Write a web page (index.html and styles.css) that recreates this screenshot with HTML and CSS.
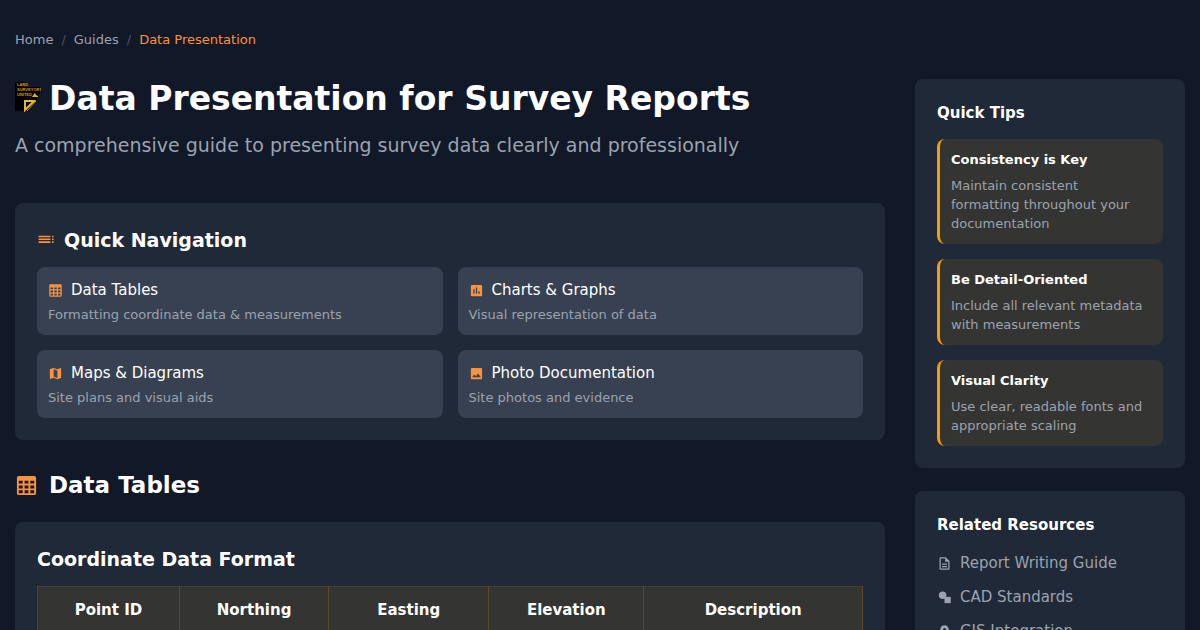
FILE: index.html
```html
<!doctype html>
<html lang="en">
  <head>
    <meta charset="UTF-8" />
    <meta name="viewport" content="width=device-width, initial-scale=1.0" />
    <title>Data Presentation for Survey Reports</title>
    <link rel="stylesheet" href="styles.css">
  </head>
  <body>
    <div class="container">
      <nav class="breadcrumb" aria-label="Breadcrumb">
        <a href="#">Home</a>
        <span class="separator">/</span>
        <a href="#">Guides</a>
        <span class="separator">/</span>
        <a href="#" class="current">Data Presentation</a>
      </nav>

      <div class="layout">
        <main>
          <header class="page-header">
            <h1>
              <svg class="logo" viewBox="0 0 26 30" aria-hidden="true">
                <path fill="#000" d="M0 0h8v5h17v6l-3 5v3l-9 10H0z" />
                <g class="logo-text">
                  <text x="2" y="4">LAND</text>
                  <text x="2" y="9">SURVEYORS</text>
                  <text x="2" y="14">UNITED</text>
                </g>
                <path fill="#e5ad16" d="M17 15l2-3 1-1 1 2 2 1v1z" />
                <path fill="none" stroke="#e5b83d" stroke-width="2" d="M10 19h9l-9 9z" />
                <path fill="none" stroke="#d99a0c" stroke-width="1" d="M21 19l-9 10" />
              </svg>
              Data Presentation for Survey Reports
            </h1>
            <p>A comprehensive guide to presenting survey data clearly and professionally</p>
          </header>

          <section class="panel quick-nav">
            <h2>
              <svg class="icon icon-md" viewBox="0 0 24 24" aria-hidden="true">
                <path d="M2 8h15V6H2v2zm0 3.500h15v-2H2v2zM2 15h15v-2H2v2zm17 0h2v-2h-2v2zm0-9v2h2V6h-2zm0 5.500h2v-2h-2v2z" />
              </svg>
              Quick Navigation
            </h2>
            <div class="nav-grid">
              <a href="#tables" class="nav-card">
                <span class="nav-title">
                  <svg class="icon" viewBox="0 0 24 24" aria-hidden="true">
                    <path fill-rule="evenodd" d="M4 2h16a2 2 0 0 1 2 2v16a2 2 0 0 1-2 2H4a2 2 0 0 1-2-2V4c0-1.100.9-2 2-2zm0 5v3h4V7zm6 0v3h4V7zm6 0v3h4V7zM4 12v3h4v-3zm6 0v3h4v-3zm6 0v3h4v-3zM4 17v3h4v-3zm6 0v3h4v-3zm6 0v3h4v-3z" />
                  </svg>
                  Data Tables
                </span>
                <span class="nav-text">Formatting coordinate data &amp; measurements</span>
              </a>
              <a href="#charts" class="nav-card">
                <span class="nav-title">
                  <svg class="icon" viewBox="0 0 24 24" aria-hidden="true">
                    <path d="M19 3H5c-1.100 0-2 .9-2 2v14c0 1.100.9 2 2 2h14c1.100 0 2-.9 2-2V5c0-1.100-.9-2-2-2zM9 17H7v-7h2v7zm4 0h-2V7h2v10zm4 0h-2v-4h2v4z" />
                  </svg>
                  Charts &amp; Graphs
                </span>
                <span class="nav-text">Visual representation of data</span>
              </a>
              <a href="#maps" class="nav-card">
                <span class="nav-title">
                  <svg class="icon" viewBox="0 0 24 24" aria-hidden="true">
                    <path d="M20.500 3l-.16.03L15 5.100 9 3 3.360 4.900c-.21.07-.36.25-.36.48V20.500c0 .28.22.5.5.5l.16-.03L9 18.900l6 2.100 5.640-1.900c.21-.07.36-.25.36-.48V3.500c0-.28-.22-.5-.5-.5zM15 19l-6-2.110V5l6 2.110V19z" />
                  </svg>
                  Maps &amp; Diagrams
                </span>
                <span class="nav-text">Site plans and visual aids</span>
              </a>
              <a href="#photos" class="nav-card">
                <span class="nav-title">
                  <svg class="icon" viewBox="0 0 24 24" aria-hidden="true">
                    <path d="M21 19V5c0-1.100-.9-2-2-2H5c-1.100 0-2 .9-2 2v14c0 1.100.9 2 2 2h14c1.100 0 2-.9 2-2zM8.500 13.500l2.500 3.010L14.500 12l4.500 6H5l3.500-4.500z" />
                  </svg>
                  Photo Documentation
                </span>
                <span class="nav-text">Site photos and evidence</span>
              </a>
            </div>
          </section>

          <section id="tables">
            <h2 class="section-title">
              <svg class="icon icon-lg" viewBox="0 0 24 24" aria-hidden="true">
                <path fill-rule="evenodd" d="M4 2h16a2 2 0 0 1 2 2v16a2 2 0 0 1-2 2H4a2 2 0 0 1-2-2V4c0-1.100.9-2 2-2zm0 5v3h4V7zm6 0v3h4V7zm6 0v3h4V7zM4 12v3h4v-3zm6 0v3h4v-3zm6 0v3h4v-3zM4 17v3h4v-3zm6 0v3h4v-3zm6 0v3h4v-3z" />
              </svg>
              Data Tables
            </h2>
            <div class="panel">
              <h3>Coordinate Data Format</h3>
              <table class="data-table">
                <thead>
                  <tr>
                    <th class="col-id" scope="col">Point ID</th>
                    <th class="col-northing" scope="col">Northing</th>
                    <th class="col-easting" scope="col">Easting</th>
                    <th class="col-elevation" scope="col">Elevation</th>
                    <th scope="col">Description</th>
                  </tr>
                </thead>
              </table>
            </div>
          </section>
        </main>

        <aside>
          <section class="panel">
            <h3 class="side-title">Quick Tips</h3>
            <div class="tips">
              <div class="tip">
                <h4>Consistency is Key</h4>
                <p>Maintain consistent formatting throughout your documentation</p>
              </div>
              <div class="tip">
                <h4>Be Detail-Oriented</h4>
                <p>Include all relevant metadata with measurements</p>
              </div>
              <div class="tip">
                <h4>Visual Clarity</h4>
                <p>Use clear, readable fonts and appropriate scaling</p>
              </div>
            </div>
          </section>

          <section class="panel">
            <h3 class="side-title">Related Resources</h3>
            <ul class="resources">
              <li>
                <a href="#">
                  <svg class="icon" viewBox="0 0 24 24" aria-hidden="true">
                    <path d="M8 16h8v2H8zm0-4h8v2H8zm6-10H6c-1.100 0-2 .9-2 2v16c0 1.100.89 2 1.990 2H18c1.100 0 2-.9 2-2V8l-6-6zm4 18H6V4h7v5h5v11z" />
                  </svg>
                  Report Writing Guide
                </a>
              </li>
              <li>
                <a href="#">
                  <svg class="icon" viewBox="0 0 24 24" aria-hidden="true">
                    <circle cx="9" cy="8.500" r="6" />
                    <path d="M12 11h10v10H12z" />
                  </svg>
                  CAD Standards
                </a>
              </li>
              <li>
                <a href="#">
                  <svg class="icon" viewBox="0 0 24 24" aria-hidden="true">
                    <path d="M12 2C8.130 2 5 5.130 5 9c0 5.250 7 13 7 13s7-7.750 7-13c0-3.870-3.130-7-7-7zm0 9.500a2.500 2.500 0 0 1 0-5 2.500 2.500 0 0 1 0 5z" />
                  </svg>
                  GIS Integration
                </a>
              </li>
            </ul>
          </section>
        </aside>
      </div>
    </div>
  </body>
</html>
```
FILE: styles.css
```css
:root {
  --bg: #111827;
  --panel: #1f2937;
  --card: #374151;
  --muted: #9ca3af;
  --orange: #fb923c;
  --amber: #f59e0b;
}

* {
  box-sizing: border-box;
  margin: 0;
  padding: 0;
}

body {
  background: var(--bg);
  color: #fff;
  font-family: 'DejaVu Sans', Verdana, sans-serif;
  font-size: 15px;
  line-height: 23px;
}

a {
  color: inherit;
  text-decoration: none;
}

.container {
  padding: 30px 15px;
}

.breadcrumb {
  display: flex;
  gap: 8px;
  margin-bottom: 30px;
  color: var(--muted);
  font-size: 13px;
  line-height: 19px;
}

.separator {
  color: #4b5563;
}

.breadcrumb .current {
  color: var(--orange);
}

.layout {
  display: grid;
  grid-template-columns: 1fr 270px;
  gap: 30px;
}

.page-header {
  margin-bottom: 44px;
}

h1 {
  display: flex;
  align-items: center;
  gap: 8px;
  margin-bottom: 13px;
  font-size: 33px;
  line-height: 40px;
}

.logo {
  width: 26px;
  height: 30px;
  margin-bottom: 4px;
}

.logo-text {
  fill: #d9950a;
  font-family: 'Liberation Sans Narrow', 'Liberation Sans', sans-serif;
  font-size: 4px;
  font-weight: bold;
}

.page-header p {
  color: var(--muted);
  font-size: 19px;
  line-height: 27px;
}

.panel {
  padding: 22px;
  background: var(--panel);
  border-radius: 8px;
}

.icon {
  flex: none;
  width: 15px;
  height: 15px;
  fill: currentColor;
}

.icon-md {
  width: 19px;
  height: 19px;
}

.icon-lg {
  width: 23px;
  height: 23px;
}

.quick-nav {
  margin-bottom: 30px;
}

.quick-nav h2 {
  display: flex;
  align-items: center;
  gap: 8px;
  margin-bottom: 12px;
  font-size: 19px;
  line-height: 30px;
}

h2 .icon,
.nav-title .icon {
  color: var(--orange);
}

.nav-grid {
  display: grid;
  grid-template-columns: 1fr 1fr;
  gap: 15px;
}

.nav-card {
  display: flex;
  flex-direction: column;
  gap: 2px;
  padding: 11px;
  background: var(--card);
  border-radius: 8px;
}

.nav-title {
  display: flex;
  align-items: center;
  gap: 8px;
  line-height: 25px;
}

.nav-text {
  color: var(--muted);
  font-size: 13px;
  line-height: 19px;
}

.section-title {
  display: flex;
  align-items: center;
  gap: 11px;
  margin-bottom: 22px;
  font-size: 23px;
  line-height: 30px;
}

#tables h3 {
  margin-bottom: 12px;
  font-size: 19px;
  line-height: 30px;
}

.data-table {
  width: 100%;
  border-collapse: collapse;
  table-layout: fixed;
}

.data-table th {
  padding: 12px;
  background: rgba(245, 158, 11, 0.1);
  border: 1px solid rgba(245, 158, 11, 0.2);
}

.col-id {
  width: 17.2%;
}

.col-northing {
  width: 18.1%;
}

.col-easting {
  width: 19.4%;
}

.col-elevation {
  width: 18.8%;
}

aside {
  display: flex;
  flex-direction: column;
  gap: 23px;
}

.side-title {
  margin-bottom: 13px;
  font-size: 15px;
  line-height: 25px;
}

.tips {
  display: grid;
  gap: 15px;
}

.tip {
  padding: 11px 15px 11px 11px;
  background: rgba(245, 158, 11, 0.1);
  border-left: 3px solid var(--amber);
  border-radius: 8px;
  font-size: 13px;
  line-height: 19px;
}

.tip h4 {
  margin-bottom: 7px;
}

.tip p {
  color: var(--muted);
}

.resources {
  display: grid;
  gap: 9px;
  list-style: none;
}

.resources a {
  display: flex;
  align-items: center;
  gap: 8px;
  color: var(--muted);
  line-height: 25px;
}
```
